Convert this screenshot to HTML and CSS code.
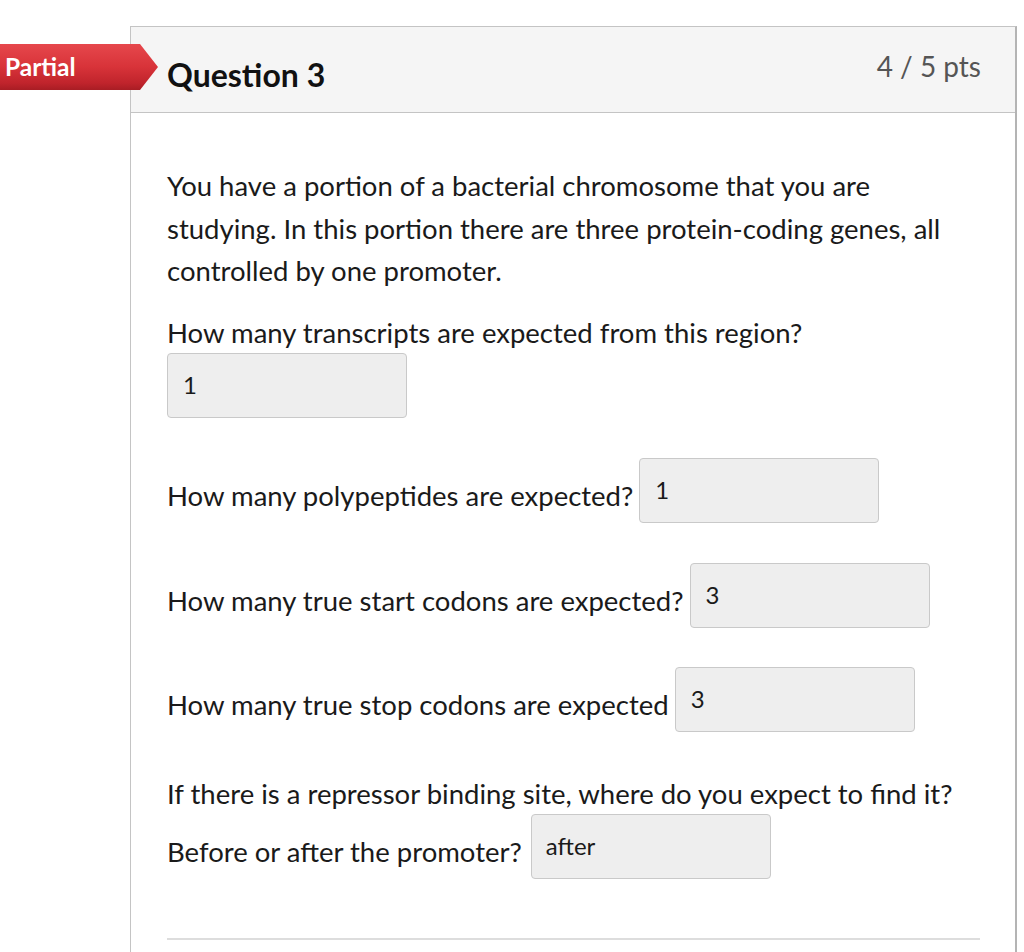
FILE: index.html
```html
<!DOCTYPE html>
<html lang="en">
<head>
<meta charset="utf-8">
<title>Question 3</title>
<link rel="stylesheet" href="styles.css">
</head>
<body>
<div class="page">
  <div class="badge"><span class="badge-text">Partial</span></div>
  <div class="card">
    <div class="card-header">
      <h2 class="title">Question 3</h2>
      <div class="pts">4 / 5 pts</div>
    </div>
    <div class="card-body">
      <p class="intro">You have a portion of a bacterial chromosome that you are studying. In this portion there are three protein-coding genes, all controlled by one promoter.</p>
      <p class="prompt">How many transcripts are expected from this region?</p>
      <div class="answer answer-block">1</div>
      <div class="row">
        <span class="label">How many polypeptides are expected?</span>
        <div class="answer">1</div>
      </div>
      <div class="row">
        <span class="label">How many true start codons are expected?</span>
        <div class="answer">3</div>
      </div>
      <div class="row row-stop">
        <span class="label">How many true stop codons are expected</span>
        <div class="answer">3</div>
      </div>
      <p class="prompt prompt-if">If there is a repressor binding site, where do you expect to find it?</p>
      <div class="row row-before">
        <span class="label">Before or after the promoter?</span>
        <div class="answer answer-word">after</div>
      </div>
      <div class="divider"></div>
    </div>
  </div>
</div>
</body>
</html>
```
FILE: styles.css
```css
html, body {
  margin: 0;
  padding: 0;
  background: #ffffff;
}

body {
  font-family: Lato, "Open Sans", "Liberation Sans", sans-serif;
  color: #1a1a1a;
  overflow: hidden;
}

.page {
  position: relative;
  padding: 26px 7px 0 130px;
  height: 926px;
}

.badge {
  position: absolute;
  left: 0;
  top: 44px;
  width: 158px;
  height: 46px;
  background: linear-gradient(to bottom, #e6474c 0%, #d83339 50%, #c0242c 85%, #a81d24 100%);
  clip-path: polygon(0 0, 140px 0, 158px 23px, 140px 46px, 0 46px);
}

.badge-text {
  display: block;
  padding: 8px 0 0 5px;
  font-weight: 700;
  font-size: 24.5px;
  line-height: 30px;
  color: #ffffff;
}

.card {
  border: 1px solid #c4c4c4;
  border-right: 2px solid #b4b4b4;
  border-bottom: none;
  height: 100%;
  box-sizing: border-box;
}

.card-header {
  display: flex;
  justify-content: space-between;
  align-items: flex-start;
  height: 85px;
  padding: 0 34px 0 36px;
  background: #f5f5f5;
  border-bottom: 1px solid #c4c4c4;
}

.title {
  margin: 29.5px 0 0 0;
  font-size: 32px;
  line-height: 36px;
  font-weight: 700;
  color: #111111;
}

.pts {
  margin-top: 22px;
  font-size: 28px;
  line-height: 34px;
  color: #555555;
}

.card-body {
  padding: 52px 35px 0 36px;
  font-size: 27.5px;
  line-height: 42.5px;
}

.intro {
  margin: 0;
}

.prompt {
  margin: 19.5px 0 0 0;
}

.answer {
  box-sizing: border-box;
  width: 240px;
  height: 65px;
  padding: 17px 14px 0 15px;
  background: #eeeeee;
  border: 1px solid #c9c9c9;
  border-radius: 4px;
  font-size: 24px;
  line-height: 28px;
  color: #1a1a1a;
  flex: none;
}

.answer-block {
  margin-top: -1.5px;
}

.answer-word {
  padding-left: 14px;
}

.row {
  display: flex;
  align-items: flex-start;
  gap: 6px;
  margin-top: 40px;
}

.label {
  margin-top: 17px;
}

.row-stop {
  margin-top: 39px;
}

.prompt-if {
  margin-top: 41px;
}

.row-before {
  margin-top: -1.5px;
  gap: 9px;
}

.divider {
  margin-top: 59px;
  height: 2px;
  background: #dddddd;
}
```
